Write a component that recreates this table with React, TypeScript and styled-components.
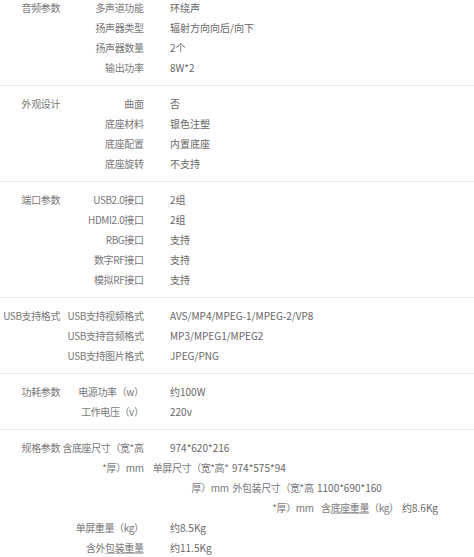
import { Fragment, ReactNode } from 'react';
import styled, { createGlobalStyle } from 'styled-components';

const GlobalStyle = createGlobalStyle`
  body {
    margin: 0;
    background: #fff;
    font-family: "Noto Sans CJK SC", "Noto Sans", sans-serif;
    font-size: 10px;
    color: #666;
  }
`;

const Table = styled.div`
  width: 474px;
  margin-top: -2px;
  overflow: hidden;
`;

const Section = styled.div<{ $first?: boolean }>`
  padding: ${(p) => (p.$first ? '0' : '8px')} 2px 7px 0;
  border-bottom: 1px solid #eee;
  line-height: 20px;

  &::after {
    content: '';
    display: block;
    clear: both;
  }
`;

const GroupTitle = styled.h3`
  float: left;
  width: 60px;
  margin: 0;
  font-size: 10px;
  font-weight: normal;
  letter-spacing: -0.4px;
  text-align: right;
  color: #777;
`;

const SpecList = styled.dl`
  margin: 0 0 0 62px;
`;

// labels float, so a long one wraps to two lines and pushes the next ones right
const Label = styled.dt`
  float: left;
  width: 81.5px;
  padding-right: 3.5px;
  letter-spacing: -0.4px;
  text-align: right;
  color: #777;
`;

const Value = styled.dd`
  margin: 0 0 0 108px;
  white-space: nowrap;
`;

const Underlined = styled.span`
  text-decoration: underline;
  text-decoration-color: #bbb;
`;

type Spec = [ReactNode, string];

interface Group {
  title: string;
  specs: Spec[];
}

const groups: Group[] = [
  {
    title: '音频参数',
    specs: [
      ['多声道功能', '环绕声'],
      ['扬声器类型', '辐射方向向后/向下'],
      ['扬声器数量', '2个'],
      ['输出功率', '8W*2'],
    ],
  },
  {
    title: '外观设计',
    specs: [
      ['曲面', '否'],
      ['底座材料', '银色注塑'],
      ['底座配置', '内置底座'],
      ['底座旋转', '不支持'],
    ],
  },
  {
    title: '端口参数',
    specs: [
      ['USB2.0接口', '2组'],
      ['HDMI2.0接口', '2组'],
      ['RBG接口', '支持'],
      ['数字RF接口', '支持'],
      ['模拟RF接口', '支持'],
    ],
  },
  {
    title: 'USB支持格式',
    specs: [
      ['USB支持视频格式', 'AVS/MP4/MPEG-1/MPEG-2/VP8'],
      ['USB支持音频格式', 'MP3/MPEG1/MPEG2'],
      ['USB支持图片格式', 'JPEG/PNG'],
    ],
  },
  {
    title: '功耗参数',
    specs: [
      ['电源功率（w）', '约100W'],
      ['工作电压（v）', '220v'],
    ],
  },
  {
    title: '规格参数',
    specs: [
      ['含底座尺寸（宽*高*厚）mm', '974*620*216'],
      ['单屏尺寸（宽*高*厚）mm', '974*575*94'],
      ['外包装尺寸（宽*高*厚）mm', '1100*690*160'],
      [
        <>
          含<Underlined>底座重量</Underlined>（kg）
        </>,
        '约8.6Kg',
      ],
      ['单屏重量（kg）', '约8.5Kg'],
      [
        <>
          含外<Underlined>包装重量</Underlined>
        </>,
        '约11.5Kg',
      ],
    ],
  },
];

export default function App() {
  return (
    <>
      <GlobalStyle />
      <Table>
        {groups.map((group, i) => (
          <Section key={group.title} $first={i === 0}>
            <GroupTitle>{group.title}</GroupTitle>
            <SpecList>
              {group.specs.map(([label, value], j) => (
                <Fragment key={j}>
                  <Label>{label}</Label>
                  <Value>{value}</Value>
                </Fragment>
              ))}
            </SpecList>
          </Section>
        ))}
      </Table>
    </>
  );
}
